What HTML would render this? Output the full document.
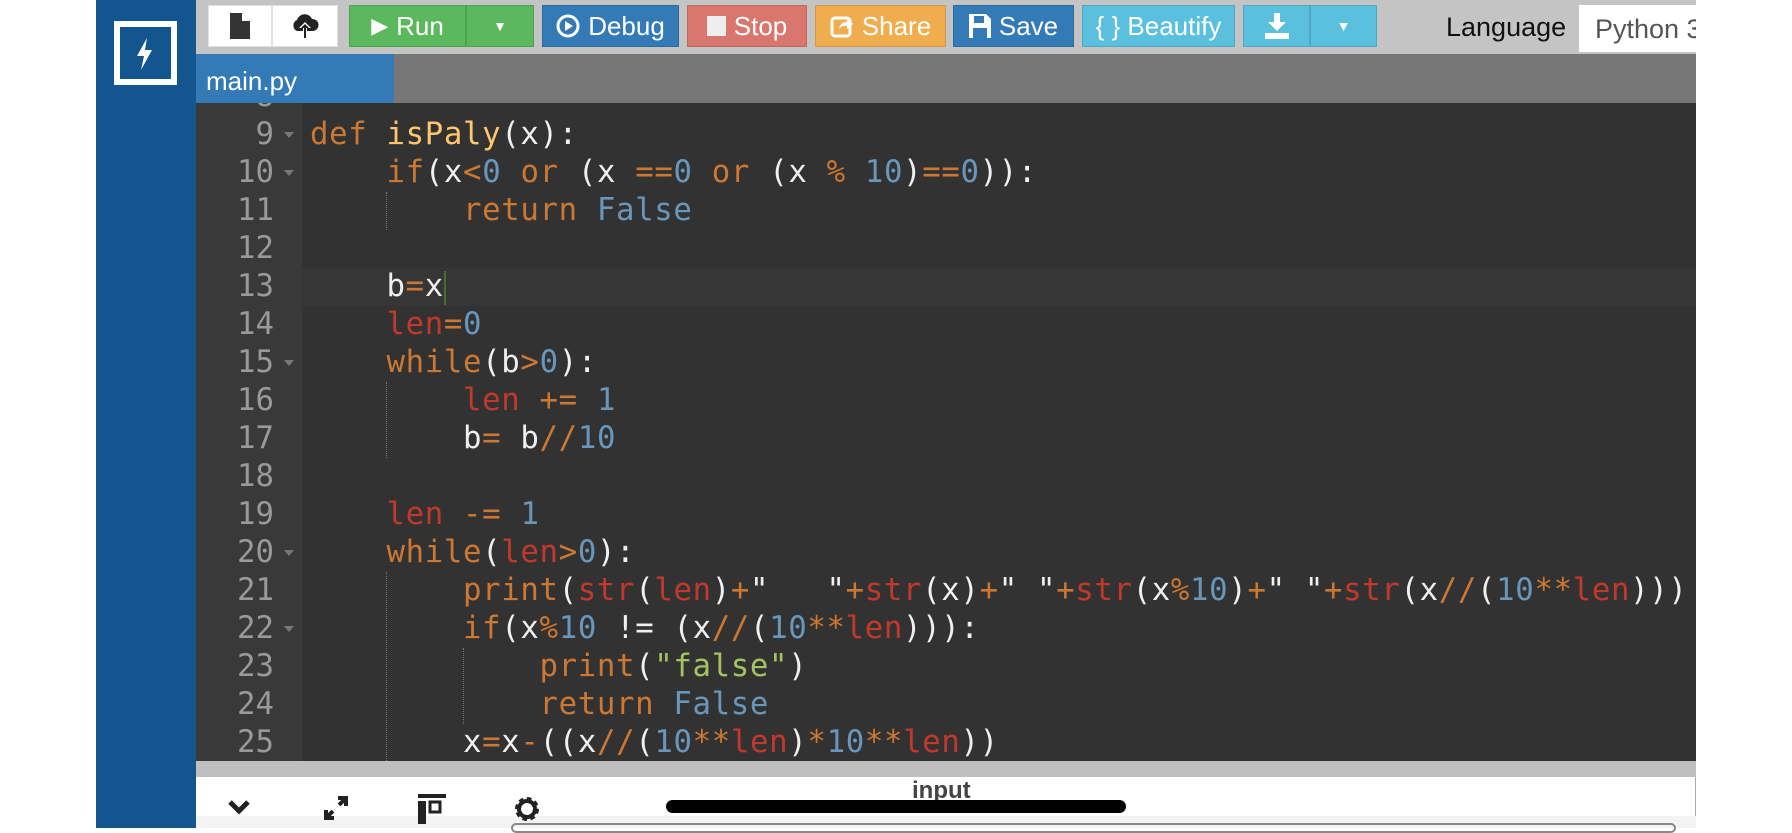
<!DOCTYPE html>
<html><head><meta charset="utf-8"><style>
*{margin:0;padding:0;box-sizing:border-box}
body{width:1792px;height:828px;background:#fff;position:relative;overflow:hidden;font-family:"Liberation Sans",sans-serif}
.abs{position:absolute}
.btn{position:absolute;top:5px;height:42px;color:#fff;font-size:26px;display:flex;align-items:center;justify-content:center;gap:8px;border:1px solid rgba(0,0,0,.12)}
#code{position:absolute;left:196px;top:103px;width:1500px;height:658px;background:#323232;overflow:hidden}
.ln{position:absolute;left:0;width:106px;height:38px;text-align:right;padding-right:28px;color:#999;font:30.7px/38px "DejaVu Sans Mono",monospace}
.cl{position:absolute;left:114px;white-space:pre;color:#f0f0f0;font:30.7px/38px "DejaVu Sans Mono",monospace;letter-spacing:0.65px}
.k{color:#cc7832}.n{color:#6897bb}.r{color:#c0392b}.s{color:#a5c261}.f{color:#ffc66d}
.fold{position:absolute;left:88px;width:0;height:0;border-left:5px solid transparent;border-right:5px solid transparent;border-top:6px solid #777}
.g{position:absolute;border-left:1px dotted #777}
</style></head><body>
<div class="abs" style="left:96px;top:0;width:100px;height:828px;background:#12558f"></div>
<div class="abs" style="left:114px;top:21px;width:63px;height:64px;border:6px solid #fff;background:#12558f"></div>
<svg class="abs" style="left:130px;top:36px" width="30" height="36" viewBox="0 0 30 36"><path d="M17 2 L7 20 H14 L11 34 L22 14 H15 Z" fill="#fff"/></svg>
<div class="abs" style="left:196px;top:0;width:1500px;height:54px;background:#c4c4c4"></div>
<div class="btn" style="left:208px;width:64px;background:#fff"><svg width="20" height="26" viewBox="0 0 20 26"><path d="M0 0H12L20 8V26H0Z" fill="#333"/><path d="M12 0V8H20" fill="#fff"/></svg></div>
<div class="btn" style="left:272px;width:66px;background:#fff"><svg width="28" height="26" viewBox="0 0 28 26"><path d="M6 18 A6 6 0 0 1 6 7 A8 8 0 0 1 21 6 A6 6 0 0 1 22 18Z" fill="#222"/><path d="M14 9 L8 15H12V25H16V15H20Z" fill="#fff"/><path d="M14 11 L10 15H13V25H15V15H18Z" fill="#222"/></svg></div>
<div class="btn" style="left:349px;width:117px;background:#5cb85c"><span style="font-size:22px">▶</span>Run</div>
<div class="btn" style="left:466px;width:68px;background:#5cb85c"><span style="font-size:14px">▼</span></div>
<div class="btn" style="left:542px;width:137px;background:#337ab7"><svg width="24" height="24"><circle cx="12" cy="12" r="10" fill="none" stroke="#fff" stroke-width="3"/><path d="M9 7L17 12L9 17Z" fill="#fff"/></svg>Debug</div>
<div class="btn" style="left:687px;width:120px;background:#d9776f"><span style="display:inline-block;width:19px;height:20px;background:#eee"></span>Stop</div>
<div class="btn" style="left:815px;width:131px;background:#f0ad4e"><svg width="24" height="24"><rect x="2" y="4" width="18" height="18" rx="3" fill="none" stroke="#fff" stroke-width="3"/><path d="M9 15C10 9 14 8 17 8V4L23 10L17 15V12C14 12 11 12 9 15Z" fill="#fff"/></svg>Share</div>
<div class="btn" style="left:953px;width:121px;background:#337ab7"><svg width="22" height="24"><path d="M0 0H17L22 5V24H0Z" fill="#fff"/><rect x="5" y="2" width="10" height="7" fill="#337ab7"/><rect x="4" y="14" width="14" height="10" fill="#337ab7"/></svg>Save</div>
<div class="btn" style="left:1082px;width:153px;background:#5bc0de">{ } Beautify</div>
<div class="btn" style="left:1243px;width:67px;background:#5bc0de"><svg width="24" height="26"><path d="M9 0H15V9H21L12 18L3 9H9Z" fill="#fff"/><rect x="0" y="20" width="24" height="6" fill="#fff"/></svg></div>
<div class="btn" style="left:1310px;width:67px;background:#5bc0de"><span style="font-size:14px">▼</span></div>
<div class="abs" style="left:1446px;top:12px;font-size:27px;color:#111">Language</div>
<div class="abs" style="left:1579px;top:5px;width:117px;height:47px;background:#fff;font-size:27px;color:#555;padding:9px 0 0 16px;white-space:nowrap;overflow:hidden">Python 3</div>
<div class="abs" style="left:196px;top:54px;width:1500px;height:49px;background:#777"></div>
<div class="abs" style="left:196px;top:54px;width:198px;height:49px;background:#337ab7;color:#fff;font-size:26px;padding:12px 0 0 10px">main.py</div>
<div id="code">
<div class="abs" style="left:0;top:0;width:106px;height:658px;background:#393939"></div>
<div class="abs" style="left:0;top:165px;width:1500px;height:38px;background:#393939"></div>
<div class="abs" style="left:106px;top:165px;width:1394px;height:38px;background:#363636"></div>
<div class="g" style="left:190px;top:89px;height:38px"></div>
<div class="g" style="left:190px;top:279px;height:76px"></div>
<div class="g" style="left:190px;top:469px;height:189px"></div>
<div class="g" style="left:267px;top:545px;height:76px"></div>
<div class="ln" style="top:-25px">8</div>
<div class="ln" style="top:13px">9</div><div class="fold" style="top:29px"></div>
<div class="ln" style="top:51px">10</div><div class="fold" style="top:67px"></div>
<div class="ln" style="top:89px">11</div>
<div class="ln" style="top:127px">12</div>
<div class="ln" style="top:165px">13</div>
<div class="ln" style="top:203px">14</div>
<div class="ln" style="top:241px">15</div><div class="fold" style="top:257px"></div>
<div class="ln" style="top:279px">16</div>
<div class="ln" style="top:317px">17</div>
<div class="ln" style="top:355px">18</div>
<div class="ln" style="top:393px">19</div>
<div class="ln" style="top:431px">20</div><div class="fold" style="top:447px"></div>
<div class="ln" style="top:469px">21</div>
<div class="ln" style="top:507px">22</div><div class="fold" style="top:523px"></div>
<div class="ln" style="top:545px">23</div>
<div class="ln" style="top:583px">24</div>
<div class="ln" style="top:621px">25</div>
<div class="cl" style="top:13px"><span class="k">def</span> <span class="f">isPaly</span>(x):</div>
<div class="cl" style="top:51px">    <span class="k">if</span>(x<span class="k">&lt;</span><span class="n">0</span> <span class="k">or</span> (x <span class="k">==</span><span class="n">0</span> <span class="k">or</span> (x <span class="k">%</span> <span class="n">10</span>)<span class="k">==</span><span class="n">0</span>)):</div>
<div class="cl" style="top:89px">        <span class="k">return</span> <span class="n">False</span></div>
<div class="cl" style="top:165px">    b<span class="k">=</span>x<span style="display:inline-block;width:2px;height:34px;background:#4a6b2a;vertical-align:middle"></span></div>
<div class="cl" style="top:203px">    <span class="r">len</span><span class="k">=</span><span class="n">0</span></div>
<div class="cl" style="top:241px">    <span class="k">while</span>(b<span class="k">&gt;</span><span class="n">0</span>):</div>
<div class="cl" style="top:279px">        <span class="r">len</span> <span class="k">+=</span> <span class="n">1</span></div>
<div class="cl" style="top:317px">        b<span class="k">=</span> b<span class="k">//</span><span class="n">10</span></div>
<div class="cl" style="top:393px">    <span class="r">len</span> <span class="k">-=</span> <span class="n">1</span></div>
<div class="cl" style="top:431px">    <span class="k">while</span>(<span class="r">len</span><span class="k">&gt;</span><span class="n">0</span>):</div>
<div class="cl" style="top:469px">        <span class="k">print</span>(<span class="r">str</span>(<span class="r">len</span>)<span class="k">+</span>"   "<span class="k">+</span><span class="r">str</span>(x)<span class="k">+</span>" "<span class="k">+</span><span class="r">str</span>(x<span class="k">%</span><span class="n">10</span>)<span class="k">+</span>" "<span class="k">+</span><span class="r">str</span>(x<span class="k">//</span>(<span class="n">10</span><span class="k">**</span><span class="r">len</span>)))</div>
<div class="cl" style="top:507px">        <span class="k">if</span>(x<span class="k">%</span><span class="n">10</span> != (x<span class="k">//</span>(<span class="n">10</span><span class="k">**</span><span class="r">len</span>))):</div>
<div class="cl" style="top:545px">            <span class="k">print</span>(<span class="s">"false"</span>)</div>
<div class="cl" style="top:583px">            <span class="k">return</span> <span class="n">False</span></div>
<div class="cl" style="top:621px">        x<span class="k">=</span>x<span class="k">-</span>((x<span class="k">//</span>(<span class="n">10</span><span class="k">**</span><span class="r">len</span>)<span class="k">*</span><span class="n">10</span><span class="k">**</span><span class="r">len</span>))</div>
</div>
<div class="abs" style="left:196px;top:761px;width:1500px;height:16px;background:#bfbfbf"></div>
<div class="abs" style="left:196px;top:777px;width:1500px;height:39px;background:#fff;border-right:1px solid #aaa"></div>
<div class="abs" style="left:196px;top:816px;width:1500px;height:12px;background:#f3f3f3"></div>
<div class="abs" style="left:511px;top:823px;width:1165px;height:10px;border:2px solid #888;border-radius:8px"></div>
<div class="abs" style="left:912px;top:777px;font-size:24px;color:#444;font-weight:bold">input</div>
<div class="abs" style="left:666px;top:800px;width:460px;height:13px;background:#000;border-radius:7px"></div>
<svg class="abs" style="left:227px;top:798px" width="24" height="18"><path d="M3 4L12 13L21 4" fill="none" stroke="#222" stroke-width="5"/></svg>
<svg class="abs" style="left:322px;top:794px" width="28" height="28"><path d="M16 4H24V12M24 4L17 11M12 24H4V16M4 24L11 17" fill="none" stroke="#222" stroke-width="4"/></svg>
<svg class="abs" style="left:418px;top:794px" width="28" height="30"><rect x="0" y="0" width="28" height="4" fill="#222"/><rect x="0" y="7" width="8" height="23" fill="#222"/><rect x="12" y="8" width="10" height="10" fill="none" stroke="#222" stroke-width="3"/></svg>
<svg class="abs" style="left:512px;top:794px" width="30" height="30" viewBox="0 0 30 30"><circle cx="15" cy="15" r="9" fill="none" stroke="#222" stroke-width="6" stroke-dasharray="4 3"/><circle cx="15" cy="15" r="8" fill="none" stroke="#222" stroke-width="4"/></svg>
</body></html>
